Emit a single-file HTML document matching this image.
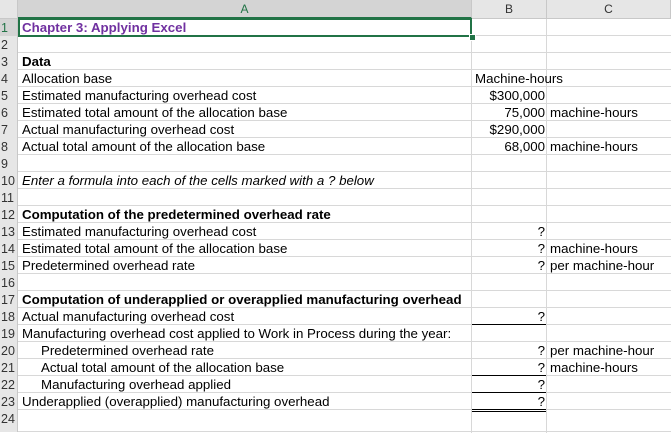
<!DOCTYPE html>
<html><head><style>
body{margin:0;width:671px;height:432px;overflow:hidden;background:#fff;font-family:"Liberation Sans",Arial,sans-serif;font-size:13.3px;color:#000;position:relative}
.hd{position:absolute;top:0;height:19px;background:#e6e6e6;border-right:1px solid #c8c8c8;border-bottom:1px solid #c8c8c8;box-sizing:border-box;text-align:center;line-height:19px;color:#333;font-size:12px}
.r{position:absolute;left:0;width:671px;height:17px;border-bottom:1px solid #d8d8d8;box-sizing:border-box;line-height:18px;white-space:nowrap}
.n{position:absolute;left:0;width:18px;height:17px;background:#e6e6e6;border-right:1px solid #c8c8c8;box-sizing:border-box;padding-left:1px;color:#333;font-size:12.5px}
.a{position:absolute;left:22px}
.b{position:absolute;left:472px;width:73px;text-align:right}
.bl{position:absolute;left:475px}
.c{position:absolute;left:550px}
.v1{position:absolute;top:19px;left:471px;width:1px;height:414px;background:#d8d8d8}
.v2{position:absolute;top:19px;left:546px;width:1px;height:414px;background:#d8d8d8}
.u{position:absolute;left:472px;width:74px;height:1px;background:#000}
</style></head><body>
<div class="hd" style="left:0;width:18px;"></div>
<div class="hd" style="left:18px;width:454px;background:#d4d4d4;color:#217346;border-bottom:2px solid #217346">A</div>
<div class="hd" style="left:472px;width:75px">B</div>
<div class="hd" style="left:547px;width:124px">C</div>
<div class="v1"></div><div class="v2"></div>
<div class="r" style="top:19px"><div class="n" style="background:#d4d4d4;color:#217346">1</div><div class="a" style="color:#7030a0;font-weight:bold">Chapter 3: Applying Excel</div></div>
<div class="r" style="top:36px"><div class="n">2</div></div>
<div class="r" style="top:53px"><div class="n">3</div><div class="a" style="font-weight:bold">Data</div></div>
<div class="r" style="top:70px"><div class="n">4</div><div class="a">Allocation base</div><div class="bl">Machine-hours</div></div>
<div class="r" style="top:87px"><div class="n">5</div><div class="a">Estimated manufacturing overhead cost</div><div class="b">$300,000</div></div>
<div class="r" style="top:104px"><div class="n">6</div><div class="a">Estimated total amount of the allocation base</div><div class="b">75,000</div><div class="c">machine-hours</div></div>
<div class="r" style="top:121px"><div class="n">7</div><div class="a">Actual manufacturing overhead cost</div><div class="b">$290,000</div></div>
<div class="r" style="top:138px"><div class="n">8</div><div class="a">Actual total amount of the allocation base</div><div class="b">68,000</div><div class="c">machine-hours</div></div>
<div class="r" style="top:155px"><div class="n">9</div></div>
<div class="r" style="top:172px"><div class="n">10</div><div class="a" style="font-style:italic">Enter a formula into each of the cells marked with a ? below</div></div>
<div class="r" style="top:189px"><div class="n">11</div></div>
<div class="r" style="top:206px"><div class="n">12</div><div class="a" style="font-weight:bold">Computation of the predetermined overhead rate</div></div>
<div class="r" style="top:223px"><div class="n">13</div><div class="a">Estimated manufacturing overhead cost</div><div class="b">?</div></div>
<div class="r" style="top:240px"><div class="n">14</div><div class="a">Estimated total amount of the allocation base</div><div class="b">?</div><div class="c">machine-hours</div></div>
<div class="r" style="top:257px"><div class="n">15</div><div class="a">Predetermined overhead rate</div><div class="b">?</div><div class="c">per machine-hour</div></div>
<div class="r" style="top:274px"><div class="n">16</div></div>
<div class="r" style="top:291px"><div class="n">17</div><div class="a" style="font-weight:bold">Computation of underapplied or overapplied manufacturing overhead</div></div>
<div class="r" style="top:308px"><div class="n">18</div><div class="a">Actual manufacturing overhead cost</div><div class="b">?</div></div>
<div class="r" style="top:325px"><div class="n">19</div><div class="a">Manufacturing overhead cost applied to Work in Process during the year:</div></div>
<div class="r" style="top:342px"><div class="n">20</div><div class="a" style="left:41px">Predetermined overhead rate</div><div class="b">?</div><div class="c">per machine-hour</div></div>
<div class="r" style="top:359px"><div class="n">21</div><div class="a" style="left:41px">Actual total amount of the allocation base</div><div class="b">?</div><div class="c">machine-hours</div></div>
<div class="r" style="top:376px"><div class="n">22</div><div class="a" style="left:41px">Manufacturing overhead applied</div><div class="b">?</div></div>
<div class="r" style="top:393px"><div class="n">23</div><div class="a">Underapplied (overapplied) manufacturing overhead</div><div class="b">?</div></div>
<div class="r" style="top:410px;height:22px"><div class="n" style="height:22px">24</div></div>
<div class="u" style="top:324px"></div>
<div class="u" style="top:375px"></div>
<div class="u" style="top:392px"></div>
<div class="u" style="top:409px"></div>
<div class="u" style="top:411px"></div>
<div style="position:absolute;left:18px;top:18px;width:454px;height:19px;border:2px solid #217346;box-sizing:border-box"></div>
<div style="position:absolute;left:469px;top:34px;width:5px;height:5px;background:#217346;border:1px solid #fff"></div>
</body></html>
